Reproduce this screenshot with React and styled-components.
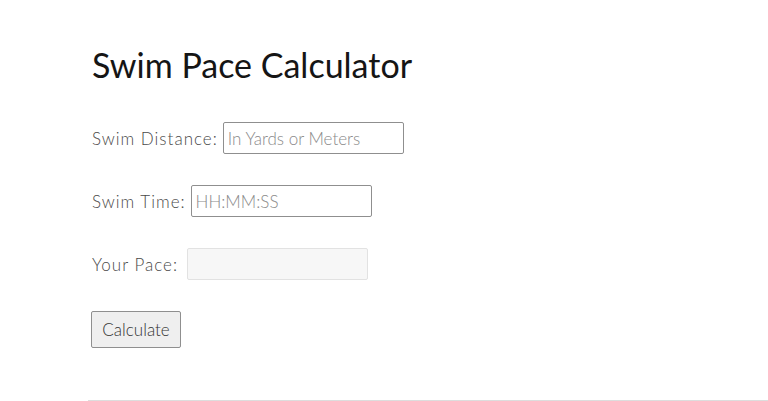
import styled, { createGlobalStyle } from "styled-components";

const GlobalStyle = createGlobalStyle`
    html, body {
        margin: 0;
        padding: 0;
        background: #fff;
        font-family: "Lato", "Liberation Sans", sans-serif;
    }
`;

const Page = styled.div`
    padding: 45px 0 0 92px;
`;

const Title = styled.h1`
    margin: 0 0 37px;
    font-size: 34px;
    font-weight: 400;
    color: #151515;
    line-height: 40px;
`;

const Form = styled.form`
    display: flex;
    flex-direction: column;
    align-items: flex-start;
    gap: 31px;
`;

const Row = styled.div`
    display: flex;
    align-items: center;
    gap: ${(p) => p.$gap || 5}px;
`;

const Label = styled.label`
    font-size: 17px;
    font-weight: 300;
    letter-spacing: 1px;
    color: #4a4a4a;
`;

const Input = styled.input`
    box-sizing: border-box;
    width: 181px;
    height: 32px;
    padding: 0 4px;
    border: 1px solid ${(p) => (p.readOnly ? "#e2e2e2" : "#8f8f8f")};
    border-radius: 2px;
    background: ${(p) => (p.readOnly ? "#f7f7f7" : "#fff")};
    font-family: "Lato", "Liberation Sans", sans-serif;
    font-size: 17px;
    font-weight: 300;
    color: #333;

    &::placeholder {
        color: #8a8a8a;
    }
`;

const Button = styled.button`
    box-sizing: border-box;
    width: 90px;
    height: 37px;
    margin-left: -1px;
    border: 1px solid #8f8f8f;
    border-radius: 2px;
    background: #efefef;
    font-family: "Lato", "Liberation Sans", sans-serif;
    font-size: 17px;
    font-weight: 300;
    color: #333;
`;

const Rule = styled.hr`
    margin: 52px 0 0 -4px;
    border: 0;
    border-top: 1px solid #ddd;
`;

const App = () => {
    return (
        <>
            <GlobalStyle />
            <Page>
                <Title>Swim Pace Calculator</Title>
                <Form onSubmit={(e) => e.preventDefault()}>
                    <Row>
                        <Label>Swim Distance:</Label>
                        <Input placeholder="In Yards or Meters" />
                    </Row>
                    <Row>
                        <Label>Swim Time:</Label>
                        <Input placeholder="HH:MM:SS" />
                    </Row>
                    <Row $gap={9}>
                        <Label>Your Pace:</Label>
                        <Input readOnly />
                    </Row>
                    <Button type="submit">Calculate</Button>
                </Form>
                <Rule />
            </Page>
        </>
    );
};

export default App;
